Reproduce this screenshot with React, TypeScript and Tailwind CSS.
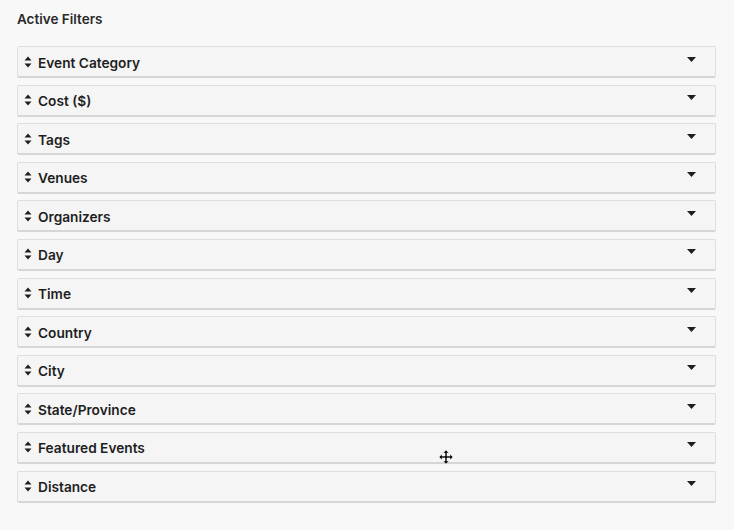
import React from 'react';

const filters = [
  'Event Category',
  'Cost ($)',
  'Tags',
  'Venues',
  'Organizers',
  'Day',
  'Time',
  'Country',
  'City',
  'State/Province',
  'Featured Events',
  'Distance',
];

const SortIcon = () => (
  <svg width="8" height="12" viewBox="0 0 8 12" className="shrink-0">
    <path d="M4 0.5 L7.5 4.5 H0.5 Z" fill="#1e1e1e" />
    <path d="M4 11.5 L7.5 7.5 H0.5 Z" fill="#1e1e1e" />
  </svg>
);

const Caret = () => (
  <svg width="9" height="5" viewBox="0 0 9 5" className="shrink-0 mb-[5px]">
    <path d="M0 0 H9 L4.5 5 Z" fill="#1e1e1e" />
  </svg>
);

// move cursor drawn over the list
const MoveCursor = () => (
  <svg width="14" height="14" viewBox="0 0 14 14">
    <path
      d="M7 0 L10 3 H8 V6 H11 V4 L14 7 L11 10 V8 H8 V11 H10 L7 14 L4 11 H6 V8 H3 V10 L0 7 L3 4 V6 H6 V3 H4 Z"
      fill="#111"
      stroke="#fff"
      strokeWidth="0.5"
    />
  </svg>
);

const FilterRow: React.FC<{ label: string }> = ({ label }) => (
  <div className="h-[32px] flex items-center bg-[#f5f5f5] border border-[#dedede] border-b-2 border-b-[#d6d6d6] rounded-[2px] pl-[6px] pr-[19px]">
    <SortIcon />
    <span className="ml-[6px] mt-[2px] text-[13.7px] font-semibold text-[#1e1e1e] flex-1 leading-[16px]">
      {label}
    </span>
    <Caret />
  </div>
);

export default function App() {
  return (
    <div
      className="relative w-[734px] h-[530px] bg-[#f8f8f8] pl-[17px] pr-[18px] pt-[11px]"
      style={{ fontFamily: 'Inter, "Liberation Sans", Arial, sans-serif' }}
    >
      <h2 className="text-[13.5px] font-semibold text-[#2a2a2a] leading-[16px]">Active Filters</h2>
      <div className="mt-[19px] flex flex-col gap-[6.6px]">
        {filters.map((f) => (
          <FilterRow key={f} label={f} />
        ))}
      </div>
      <div className="absolute left-[439px] top-[450px]">
        <MoveCursor />
      </div>
    </div>
  );
}
